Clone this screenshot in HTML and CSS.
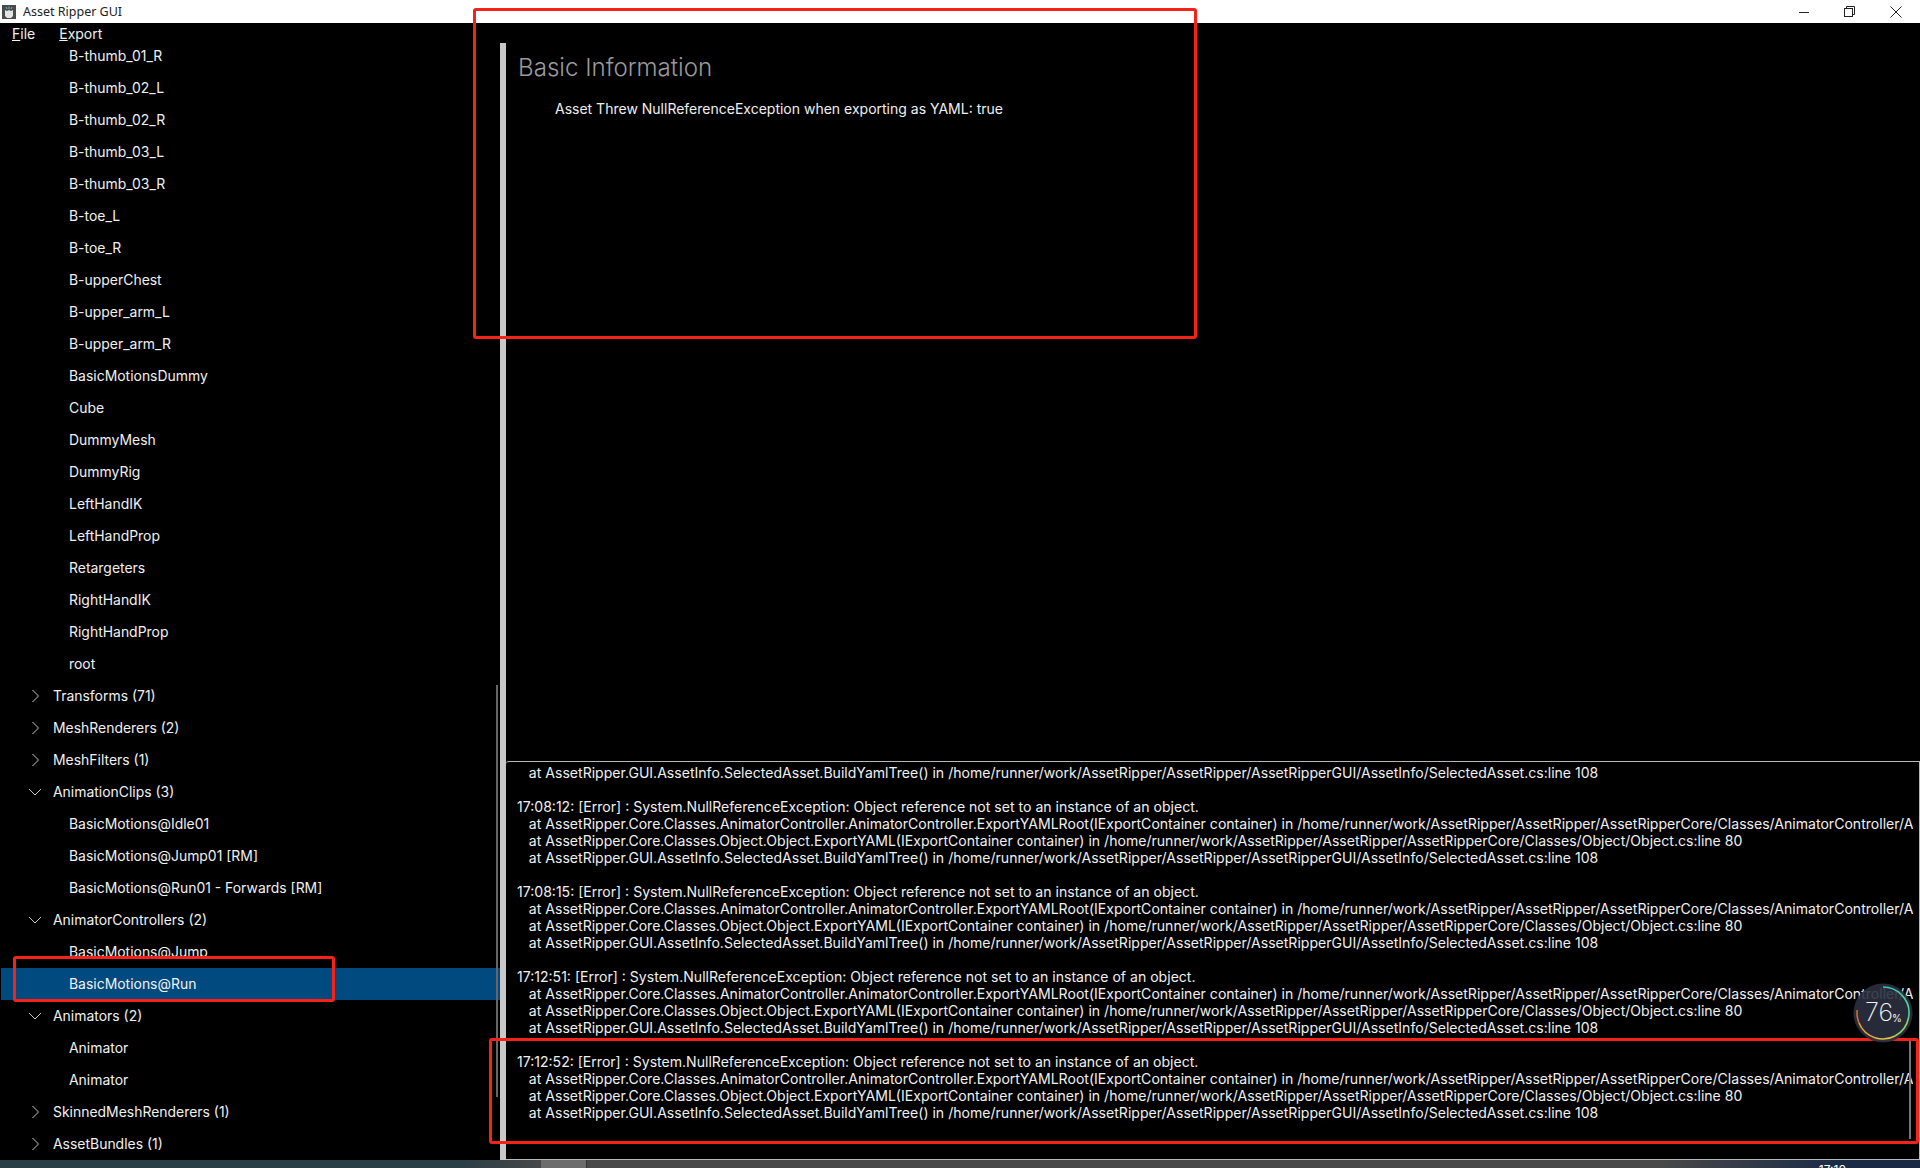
FILE: index.html
```html
<!DOCTYPE html>
<html lang="en">
<head>
<meta charset="utf-8">
<title>Asset Ripper GUI</title>
<link rel="stylesheet" href="styles.css">
</head>
<body>
<div class="app">
  <header class="titlebar">
    <svg class="app-icon" width="14" height="14" viewBox="0 0 14 14"><rect width="14" height="14" fill="#4a4a4a"/><path d="M3 5l2 1 2-1 2 1 2-1v6l-2 2H5l-2-2z" fill="#e4e4e4"/><path d="M4 2l1 2M7 1.500v2.500M10 2l-1 2" stroke="#5ab4d8" stroke-width="1"/></svg>
    <span class="title">Asset Ripper GUI</span>
    <div class="win-controls">
      <svg width="10" height="10" viewBox="0 0 10 10"><path d="M0 5.500h10" stroke="#222" stroke-width="1"/></svg>
      <svg width="11" height="11" viewBox="0 0 11 11" fill="none" stroke="#222"><rect x=".5" y="2.500" width="8" height="8"/><path d="M2.500 2.500v-2h8v8h-2"/></svg>
      <svg width="12" height="12" viewBox="0 0 12 12"><path d="M.5.500l11 11M11.500.500l-11 11" stroke="#222" stroke-width="1"/></svg>
    </div>
  </header>
  <main class="main">
    <section class="left">
      <nav class="menu"><span class="menu-item"><u>F</u>ile</span><span class="menu-item"><u>E</u>xport</span></nav>
      <div class="tree">
        <div class="tree-list">
          <div class="row leaf">B-thumb_01_R</div>
          <div class="row leaf">B-thumb_02_L</div>
          <div class="row leaf">B-thumb_02_R</div>
          <div class="row leaf">B-thumb_03_L</div>
          <div class="row leaf">B-thumb_03_R</div>
          <div class="row leaf">B-toe_L</div>
          <div class="row leaf">B-toe_R</div>
          <div class="row leaf">B-upperChest</div>
          <div class="row leaf">B-upper_arm_L</div>
          <div class="row leaf">B-upper_arm_R</div>
          <div class="row leaf">BasicMotionsDummy</div>
          <div class="row leaf">Cube</div>
          <div class="row leaf">DummyMesh</div>
          <div class="row leaf">DummyRig</div>
          <div class="row leaf">LeftHandIK</div>
          <div class="row leaf">LeftHandProp</div>
          <div class="row leaf">Retargeters</div>
          <div class="row leaf">RightHandIK</div>
          <div class="row leaf">RightHandProp</div>
          <div class="row leaf">root</div>
          <div class="row group"><svg class="chev" width="12" height="12" viewBox="0 0 12 12"><path d="M3.500 0l6 6-6 6"/></svg>Transforms (71)</div>
          <div class="row group"><svg class="chev" width="12" height="12" viewBox="0 0 12 12"><path d="M3.500 0l6 6-6 6"/></svg>MeshRenderers (2)</div>
          <div class="row group"><svg class="chev" width="12" height="12" viewBox="0 0 12 12"><path d="M3.500 0l6 6-6 6"/></svg>MeshFilters (1)</div>
          <div class="row group"><svg class="chev" width="12" height="12" viewBox="0 0 12 12"><path d="M0 3l6 6 6-6"/></svg>AnimationClips (3)</div>
          <div class="row leaf">BasicMotions@Idle01</div>
          <div class="row leaf">BasicMotions@Jump01 [RM]</div>
          <div class="row leaf">BasicMotions@Run01 - Forwards [RM]</div>
          <div class="row group"><svg class="chev" width="12" height="12" viewBox="0 0 12 12"><path d="M0 3l6 6 6-6"/></svg>AnimatorControllers (2)</div>
          <div class="row leaf">BasicMotions@Jump</div>
          <div class="row leaf selected">BasicMotions@Run</div>
          <div class="row group"><svg class="chev" width="12" height="12" viewBox="0 0 12 12"><path d="M0 3l6 6 6-6"/></svg>Animators (2)</div>
          <div class="row leaf">Animator</div>
          <div class="row leaf">Animator</div>
          <div class="row group"><svg class="chev" width="12" height="12" viewBox="0 0 12 12"><path d="M3.500 0l6 6-6 6"/></svg>SkinnedMeshRenderers (1)</div>
          <div class="row group"><svg class="chev" width="12" height="12" viewBox="0 0 12 12"><path d="M3.500 0l6 6-6 6"/></svg>AssetBundles (1)</div>
        </div>
        <div class="tree-scroll"></div>
      </div>
    </section>
    <div class="splitter"></div>
    <section class="right">
      <div class="info">
        <h1 class="info-title">Basic Information</h1>
        <p class="info-line">Asset Threw NullReferenceException when exporting as YAML: true</p>
      </div>
      <div class="log">
<pre class="log-text">   at AssetRipper.GUI.AssetInfo.SelectedAsset.BuildYamlTree() in /home/runner/work/AssetRipper/AssetRipper/AssetRipperGUI/AssetInfo/SelectedAsset.cs:line 108

17:08:12: [Error] : System.NullReferenceException: Object reference not set to an instance of an object.
   at AssetRipper.Core.Classes.AnimatorController.AnimatorController.ExportYAMLRoot(IExportContainer container) in /home/runner/work/AssetRipper/AssetRipper/AssetRipperCore/Classes/AnimatorController/AnimatorController.cs:line 120
   at AssetRipper.Core.Classes.Object.Object.ExportYAML(IExportContainer container) in /home/runner/work/AssetRipper/AssetRipper/AssetRipperCore/Classes/Object/Object.cs:line 80
   at AssetRipper.GUI.AssetInfo.SelectedAsset.BuildYamlTree() in /home/runner/work/AssetRipper/AssetRipper/AssetRipperGUI/AssetInfo/SelectedAsset.cs:line 108

17:08:15: [Error] : System.NullReferenceException: Object reference not set to an instance of an object.
   at AssetRipper.Core.Classes.AnimatorController.AnimatorController.ExportYAMLRoot(IExportContainer container) in /home/runner/work/AssetRipper/AssetRipper/AssetRipperCore/Classes/AnimatorController/AnimatorController.cs:line 120
   at AssetRipper.Core.Classes.Object.Object.ExportYAML(IExportContainer container) in /home/runner/work/AssetRipper/AssetRipper/AssetRipperCore/Classes/Object/Object.cs:line 80
   at AssetRipper.GUI.AssetInfo.SelectedAsset.BuildYamlTree() in /home/runner/work/AssetRipper/AssetRipper/AssetRipperGUI/AssetInfo/SelectedAsset.cs:line 108

17:12:51: [Error] : System.NullReferenceException: Object reference not set to an instance of an object.
   at AssetRipper.Core.Classes.AnimatorController.AnimatorController.ExportYAMLRoot(IExportContainer container) in /home/runner/work/AssetRipper/AssetRipper/AssetRipperCore/Classes/AnimatorController/AnimatorController.cs:line 120
   at AssetRipper.Core.Classes.Object.Object.ExportYAML(IExportContainer container) in /home/runner/work/AssetRipper/AssetRipper/AssetRipperCore/Classes/Object/Object.cs:line 80
   at AssetRipper.GUI.AssetInfo.SelectedAsset.BuildYamlTree() in /home/runner/work/AssetRipper/AssetRipper/AssetRipperGUI/AssetInfo/SelectedAsset.cs:line 108

17:12:52: [Error] : System.NullReferenceException: Object reference not set to an instance of an object.
   at AssetRipper.Core.Classes.AnimatorController.AnimatorController.ExportYAMLRoot(IExportContainer container) in /home/runner/work/AssetRipper/AssetRipper/AssetRipperCore/Classes/AnimatorController/AnimatorController.cs:line 120
   at AssetRipper.Core.Classes.Object.Object.ExportYAML(IExportContainer container) in /home/runner/work/AssetRipper/AssetRipper/AssetRipperCore/Classes/Object/Object.cs:line 80
   at AssetRipper.GUI.AssetInfo.SelectedAsset.BuildYamlTree() in /home/runner/work/AssetRipper/AssetRipper/AssetRipperGUI/AssetInfo/SelectedAsset.cs:line 108
</pre>
        <div class="log-scroll"></div>
      </div>
    </section>
  </main>
  <footer class="taskbar">
    <div class="task-left"></div>
    <div class="task-btn"></div>
    <div class="task-mid"></div>
    <div class="task-right"><span class="clock">17:10</span></div>
  </footer>
  <div class="mark mark-info"></div>
  <div class="mark mark-row"></div>
  <div class="mark mark-log"></div>
  <svg class="gauge" width="60" height="60" viewBox="0 0 60 60">
    <circle cx="30" cy="30" r="29.500" fill="#2b303f" fill-opacity=".9"/>
    <g fill="none" stroke-width="1.600">
      <path d="M30 4A26 26 0 0 1 48.400 11.600" stroke="#3fc6b4"/>
      <path d="M48.400 11.600A26 26 0 0 1 55.500 35" stroke="#4fd39a"/>
      <path d="M55.500 35A26 26 0 0 1 42 53" stroke="#8fd06a"/>
      <path d="M42 53A26 26 0 0 1 22 54.700" stroke="#d9c24a"/>
      <path d="M22 54.700A26 26 0 0 1 6 40" stroke="#e8a33c"/>
      <path d="M6 40A26 26 0 0 1 4.200 27" stroke="#d9682f"/>
    </g>
    <text class="gauge-num" x="26" y="38" text-anchor="middle">76</text>
    <text class="gauge-pct" x="44" y="39" text-anchor="middle">%</text>
  </svg>
</div>
</body>
</html>
```

FILE: styles.css
```css
* { box-sizing: border-box; }
html, body { margin: 0; height: 100%; background: #000; overflow: hidden; }
body { font-family: Inter, "Noto Sans", sans-serif; color: #f0f0f0; font-size: 14px; }

.app { position: relative; display: flex; flex-direction: column; height: 1168px; width: 1920px; overflow: hidden; }

.titlebar { display: flex; align-items: center; height: 23px; flex: none; background: #fff; color: #222; padding-left: 2px; }
.app-icon { flex: none; margin-right: 7px; }
.title { font-family: "Noto Sans", sans-serif; font-size: 12.5px; }
.win-controls { display: flex; align-items: center; gap: 35px; margin-left: auto; padding-right: 18px; }

.main { display: flex; flex: 1; min-height: 0; }

.left { display: flex; flex-direction: column; width: 500px; flex: none; }
.menu { display: flex; gap: 24px; height: 20px; flex: none; padding: 2px 0 0 12px; align-items: center; font-size: 14px; line-height: 20px; }
.tree { position: relative; flex: 1; overflow: hidden; }
.tree-list { margin-top: -3px; }
.row { display: flex; align-items: center; height: 32px; padding-bottom: 2px; font-size: 13.95px; white-space: nowrap; color: #f0f0f0; }
.leaf { padding-left: 69px; }
.group { padding-left: 29px; }
.chev { flex: none; margin: 2px 12px 0 0; fill: none; stroke: #c8c8c8; stroke-width: 1; }
.selected { background: #004a80; width: 499px; margin-left: 1px; padding-left: 68px; }
.tree-scroll { position: absolute; left: 496px; top: 642px; width: 2px; height: 412px; background: #666; }

.splitter { width: 6px; flex: none; margin-top: 20px; background: #c8c8c8; }

.right { display: flex; flex-direction: column; flex: 1; min-width: 0; }
.info { flex: 1; padding: 30px 0 0 12px; }
.info-title { margin: 0; font-size: 24.1px; font-weight: 300; line-height: 30px; color: #9a9a9a; }
.info-line { margin: 17px 0 0 37px; font-size: 14px; line-height: 17px; color: #f0f0f0; }

.log { position: relative; height: 399px; flex: none; overflow: hidden; border: 1px solid #b8b8b8; border-left: 0; border-top-left-radius: 3px; padding: 2px 6px 0 11px; }
.log-text { margin: 0; font-family: Inter, "Noto Sans", sans-serif; font-size: 14.07px; line-height: 17px; color: #f0f0f0; white-space: pre; overflow: hidden; }
.log-scroll { position: absolute; right: 8px; top: 276px; width: 2px; height: 101px; background: #777; }

.taskbar { display: flex; height: 8px; flex: none; overflow: hidden; }
.task-left { width: 541px; background: linear-gradient(90deg, #2a3e46 0, #2a3e46 460px, #474747 100%); }
.task-btn { width: 45px; background: #6c6c6c; }
.task-mid { flex: 1; background: #484848; border-left: 1px solid #333; }
.task-right { display: flex; justify-content: flex-end; width: 260px; padding: 3px 74px 0 0; background: linear-gradient(90deg, #484848 0, #1a2a45 70%); }
.clock { font-size: 12px; line-height: 14px; color: #fff; }

.mark { position: absolute; border: 3px solid #f5221a; border-radius: 3px; pointer-events: none; }
.mark-info { left: 473px; top: 8px; width: 724px; height: 331px; }
.mark-row { left: 13px; top: 956px; width: 322px; height: 46px; }
.mark-row::before { content: ""; display: block; height: 9px; background: #000; }
.mark-log { left: 489px; top: 1038px; width: 1430px; height: 106px; }

.gauge { position: absolute; left: 1853px; top: 983px; }
.gauge-num { font-family: Inter, sans-serif; font-size: 25px; font-weight: 200; fill: #f4f4f4; }
.gauge-pct { font-family: Inter, sans-serif; font-size: 10px; fill: #f4f4f4; }
```
